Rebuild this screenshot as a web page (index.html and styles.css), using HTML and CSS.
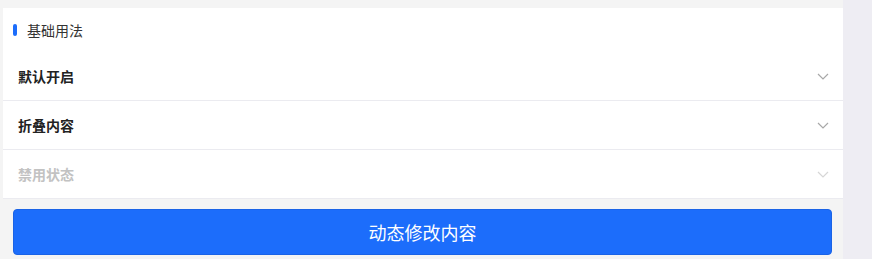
FILE: index.html
```html
<!DOCTYPE html>
<html lang="zh">
<head>
<meta charset="utf-8">
<link rel="stylesheet" href="styles.css">
</head>
<body>
<div class="page">
  <main class="demo">
    <section class="card">
      <div class="title"><span class="bar"></span>基础用法</div>
      <div class="item"><span>默认开启</span><svg class="arrow" viewBox="0 0 12 7" width="12" height="7"><path d="M1 1l5 5 5-5" fill="none" stroke="currentColor" stroke-width="1.2"/></svg></div>
      <div class="item"><span>折叠内容</span><svg class="arrow" viewBox="0 0 12 7" width="12" height="7"><path d="M1 1l5 5 5-5" fill="none" stroke="currentColor" stroke-width="1.2"/></svg></div>
      <div class="item disabled"><span>禁用状态</span><svg class="arrow" viewBox="0 0 12 7" width="12" height="7"><path d="M1 1l5 5 5-5" fill="none" stroke="currentColor" stroke-width="1.2"/></svg></div>
    </section>
    <div class="actions"><button class="btn">动态修改内容</button></div>
  </main>
  <aside class="side"></aside>
</div>
</body>
</html>
```
FILE: styles.css
```css
html, body { margin: 0; padding: 0; }
body {
  font-family: "Noto Sans CJK SC", "Noto Sans", sans-serif;
  background: #f4f4f4;
}
.page { display: flex; width: 872px; height: 259px; overflow: hidden; }
.demo { width: 843px; background: #f4f4f4; padding-top: 8px; box-sizing: border-box; }
.side { flex: 1; background: #eeedf3; }
.card { background: #fff; margin-left: 3px; }
.title {
  display: flex; align-items: center; height: 43px; padding-bottom: 1px;
  font-size: 14px; color: #333; padding-left: 10px;
}
.bar { width: 4px; height: 12px; border-radius: 2px; background: #1c6dfb; margin-right: 10px; }
.item {
  display: flex; align-items: center; justify-content: space-between;
  height: 48px; border-bottom: 1px solid #ebebf0;
  padding: 0 14px 0 15px;
  font-size: 14px; font-weight: 700; color: #222;
}
.item span { margin-top: -1px; }
.item .arrow { color: #a8a8a8; }
.item.disabled { color: #c2c2c2; }
.item.disabled .arrow { color: #d6d6d6; }
.actions { padding: 10px 0 0 13px; }
.btn {
  display: block; width: 819px; height: 46px;
  background: #1c6dfb; border: 1px solid #1a63e6; border-radius: 4px;
  color: #fff; font-size: 18px; font-family: inherit;
}
```
